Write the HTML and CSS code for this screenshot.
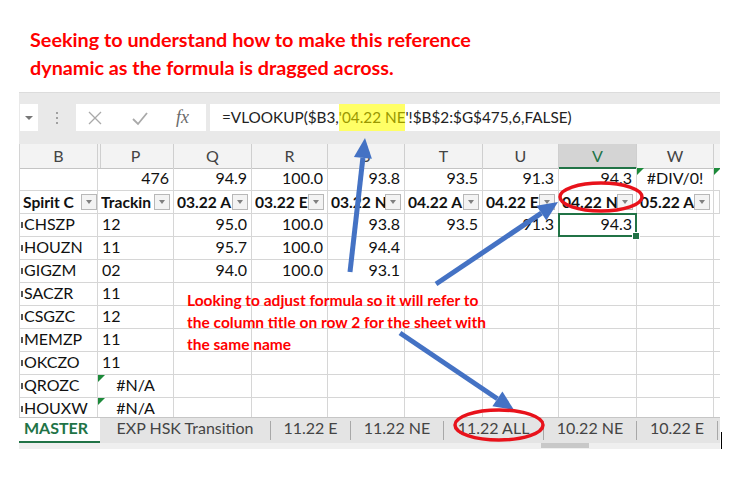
FILE: index.html
```html
<!DOCTYPE html>
<html>
<head>
<meta charset="utf-8">
<link rel="stylesheet" href="styles.css">
</head>
<body>
<div class="page">
  <div class="title">Seeking to understand how to make this reference<br>dynamic as the formula is dragged across.</div>
  <div class="excel">
    <div class="fbar">
      <div class="namebox"><span class="nb-arrow"></span></div>
      <div class="grip"><span></span><span></span><span></span></div>
      <div class="btns">
        <svg class="ic-x" width="16" height="16" viewBox="0 0 16 16"><path d="M2 2 L14 14 M14 2 L2 14" stroke="#a9a9a9" stroke-width="1.3" fill="none"/></svg>
        <svg class="ic-ok" width="18" height="16" viewBox="0 0 18 16"><path d="M2 9 L7 14 L16 3" stroke="#a9a9a9" stroke-width="1.8" fill="none"/></svg>
        <span class="fx">fx</span>
      </div>
      <div class="formula">=VLOOKUP($B3,<span class="hl">'04.22 NE</span>'!$B$2:$G$475,6,FALSE)</div>
    </div>
    <div class="sheet">
      <div class="row hdr">
        <div class="c">B</div><div class="c pl">P</div><div class="c">Q</div><div class="c">R</div><div class="c">S</div><div class="c">T</div><div class="c">U</div><div class="c vsel">V</div><div class="c">W</div><div class="c"></div>
      </div>
      <div class="row">
        <div class="c"></div><div class="c r">476</div><div class="c r">94.9</div><div class="c r">100.0</div><div class="c r">93.8</div><div class="c r">93.5</div><div class="c r">91.3</div><div class="c r">94.3</div><div class="c m tri">#DIV/0!</div><div class="c tri"></div>
      </div>
      <div class="row th">
        <div class="c first"><span class="t">Spirit C</span><span class="dd"></span></div>
        <div class="c"><span class="t">Trackin</span><span class="dd"></span></div>
        <div class="c"><span class="t">03.22 A</span><span class="dd"></span></div>
        <div class="c"><span class="t">03.22 E</span><span class="dd"></span></div>
        <div class="c"><span class="t">03.22 N</span><span class="dd"></span></div>
        <div class="c"><span class="t">04.22 A</span><span class="dd"></span></div>
        <div class="c"><span class="t">04.22 E</span><span class="dd"></span></div>
        <div class="c"><span class="t">04.22 N</span><span class="dd"></span></div>
        <div class="c"><span class="t">05.22 A</span><span class="dd"></span></div>
        <div class="c"></div>
      </div>
      <div class="row">
        <div class="c b">CHSZP</div><div class="c">12</div><div class="c r">95.0</div><div class="c r">100.0</div><div class="c r">93.8</div><div class="c r">93.5</div><div class="c r">91.3</div><div class="c r sel">94.3</div><div class="c"></div><div class="c"></div>
      </div>
      <div class="row">
        <div class="c b">HOUZN</div><div class="c">11</div><div class="c r">95.7</div><div class="c r">100.0</div><div class="c r">94.4</div><div class="c"></div><div class="c"></div><div class="c"></div><div class="c"></div><div class="c"></div>
      </div>
      <div class="row">
        <div class="c b">GIGZM</div><div class="c">02</div><div class="c r">94.0</div><div class="c r">100.0</div><div class="c r">93.1</div><div class="c"></div><div class="c"></div><div class="c"></div><div class="c"></div><div class="c"></div>
      </div>
      <div class="row">
        <div class="c b">SACZR</div><div class="c">11</div><div class="c"></div><div class="c"></div><div class="c"></div><div class="c"></div><div class="c"></div><div class="c"></div><div class="c"></div><div class="c"></div>
      </div>
      <div class="row">
        <div class="c b">CSGZC</div><div class="c">12</div><div class="c"></div><div class="c"></div><div class="c"></div><div class="c"></div><div class="c"></div><div class="c"></div><div class="c"></div><div class="c"></div>
      </div>
      <div class="row">
        <div class="c b">MEMZP</div><div class="c">11</div><div class="c"></div><div class="c"></div><div class="c"></div><div class="c"></div><div class="c"></div><div class="c"></div><div class="c"></div><div class="c"></div>
      </div>
      <div class="row">
        <div class="c b">OKCZO</div><div class="c">11</div><div class="c"></div><div class="c"></div><div class="c"></div><div class="c"></div><div class="c"></div><div class="c"></div><div class="c"></div><div class="c"></div>
      </div>
      <div class="row">
        <div class="c b">QROZC</div><div class="c m tri">#N/A</div><div class="c"></div><div class="c"></div><div class="c"></div><div class="c"></div><div class="c"></div><div class="c"></div><div class="c"></div><div class="c"></div>
      </div>
      <div class="row">
        <div class="c b">HOUXW</div><div class="c m tri">#N/A</div><div class="c"></div><div class="c"></div><div class="c"></div><div class="c"></div><div class="c"></div><div class="c"></div><div class="c"></div><div class="c"></div>
      </div>
    </div>
    <div class="tabs">
      <div class="tab active">MASTER</div>
      <div class="tab w170">EXP HSK Transition</div><span class="sep"></span>
      <div class="tab w79">11.22 E</div><span class="sep"></span>
      <div class="tab w92">11.22 NE</div><span class="sep"></span>
      <div class="tab w99">11.22 ALL</div><span class="sep"></span>
      <div class="tab w92">10.22 NE</div><span class="sep"></span>
      <div class="tab w80">10.22 E</div><span class="sep"></span>
    </div>
    <div class="hscroll"><span class="thumb"></span></div>
  </div>
  <div class="note">Looking to adjust formula so it will refer to<br>the column title on row 2 for the sheet with<br>the same name</div>
  <span class="cursor"></span>
  <svg class="overlay" width="739" height="481" viewBox="0 0 739 481">
    <g stroke="#4472c4" stroke-width="5" fill="none" stroke-linecap="butt">
      <line x1="350" y1="272" x2="362.9" y2="157.9"/>
      <line x1="436" y1="284" x2="541.4" y2="213.2"/>
      <line x1="400" y1="333" x2="497.4" y2="398.8"/>
    </g>
    <g fill="#4472c4">
      <polygon points="365,138 371.9,158.8 353.9,157"/>
      <polygon points="558,202 546.4,220.6 536.4,205.7"/>
      <polygon points="514,410 492.4,406.2 502.4,391.4"/>
    </g>
    <g stroke="#e8121b" stroke-width="3.5" fill="none">
      <ellipse cx="601" cy="197" rx="41" ry="14"/>
      <ellipse cx="499" cy="425" rx="44" ry="15"/>
    </g>
  </svg>
</div>
</body>
</html>
```
FILE: styles.css
```css
* { box-sizing: border-box; }
html, body { margin: 0; padding: 0; background: #fff; }
body { width: 739px; height: 481px; overflow: hidden; font-family: Lato, "Open Sans", sans-serif; }
.page { position: relative; width: 739px; height: 481px; padding-top: 25px; overflow: hidden; }

.title {
  margin: 0 0 0 30px;
  font-weight: 700;
  font-size: 19.8px;
  line-height: 28px;
  color: #f00;
}

.excel { margin: 11px 0 0 19px; width: 701px; }

.fbar {
  height: 52px;
  background: #e9e9e9;
  border-top: 1px solid #dcdcdc;
  display: flex;
  align-items: flex-start;
  padding: 11px 0 0 1px;
}
.namebox {
  width: 18px; height: 27px; background: #fff;
  display: flex; align-items: center; padding-left: 5px;
}
.nb-arrow { width: 0; height: 0; border-left: 4px solid transparent; border-right: 4px solid transparent; border-top: 4px solid #777; }
.grip { width: 38px; height: 27px; display: flex; flex-direction: column; align-items: center; justify-content: center; gap: 3px; }
.grip span { width: 2px; height: 2px; background: #a0a0a0; }
.btns {
  width: 130px; height: 27px; background: #fff;
  position: relative; display: flex; align-items: center;
}
.ic-x { margin-left: 11px; }
.ic-ok { margin-left: 28px; }
.fx { margin-left: 27px; font-family: "Liberation Serif", serif; font-style: italic; font-size: 18px; color: #6a6a6a; }
.formula {
  margin-left: 4px; width: 510px; height: 27px; background: #fff;
  padding-left: 12px; font-size: 15.3px; line-height: 27px; color: #222; white-space: nowrap;
}
.hl { display: inline-block; background: #ffff66; color: #9a9800; line-height: 27px; }

.sheet { height: 273px; overflow: hidden; border-left: 1px solid #d4d4d4; background: #fff; }
.row {
  display: grid;
  grid-template-columns: 78px 76px 78px 76px 77px 78px 76px 78px 77px 6px;
  height: 23px;
}
.c {
  position: relative;
  border-right: 1px solid #d6d6d6;
  border-bottom: 1px solid #d6d6d6;
  padding: 0 4px;
  font-size: 16px;
  line-height: 20px;
  color: #111;
  white-space: nowrap;
}
.r { text-align: right; }
.m { text-align: center; }
.hdr { height: 24px; background: #f3f3f3; }
.hdr .c { text-align: center; color: #444; line-height: 23px; border-right-color: #cfcfcf; border-bottom-color: #c4c4c4; }
.hdr .pl { box-shadow: inset 2px 0 0 #f3f3f3, inset 3px 0 0 #cfcfcf; }
.hdr .vsel { background: #d4d4d4; border-bottom: 2px solid #217346; color: #217346; }

.th .c { display: flex; align-items: center; font-weight: 700; font-size: 15.6px; padding: 0 0 1px 3px; }
.th .t { flex: 1; min-width: 0; overflow: hidden; white-space: nowrap; }
.dd {
  flex: none; width: 16px; height: 16px; border: 1px solid #b8b8b8; background: #f3f3f3;
  margin-right: 3px;
  display: flex; align-items: center; justify-content: center;
}
.th .first .dd { margin-right: 0; }
.dd::after { content: ""; border-left: 3.5px solid transparent; border-right: 3.5px solid transparent; border-top: 4px solid #808080; }

.b::before { content: ""; position: absolute; left: 1px; top: 8px; width: 1.5px; height: 6px; background: #555; }
.tri::before { content: ""; position: absolute; left: 0; top: 0; border-top: 7px solid #1c8a3a; border-right: 7px solid transparent; }
.sel::after { content: ""; position: absolute; left: -1px; top: -1px; right: -1px; bottom: -1px; border: 2px solid #217346; }
.sel::before { content: ""; position: absolute; right: -4px; bottom: -4px; width: 6px; height: 6px; background: #217346; border: 1px solid #fff; z-index: 2; }

.tabs {
  height: 26px; background: #e4e4e4; border-top: 1px solid #c6c6c6;
  display: flex; align-items: center; overflow: hidden;
}
.tab { flex: none; padding: 0 0 6px; text-align: center; font-size: 16px; line-height: 19px; color: #444; white-space: nowrap; }
.w170 { width: 170px; }
.w79 { width: 79px; }
.w80 { width: 80px; }
.w92 { width: 92px; }
.w99 { width: 99px; }
.tab.active {
  align-self: stretch; width: 81px; padding: 0 0 0 5px; text-align: left; line-height: 21px; background: #fff;
  color: #217346; font-weight: 700; border-bottom: 2px solid #217346; margin-top: -1px;
}
.sep { flex: none; width: 1px; height: 19px; background: #a8a8a8; margin-bottom: 1px; }
.hscroll { height: 6px; background: #efefef; position: relative; }
.thumb { position: absolute; left: 522px; top: 0; width: 48px; height: 5px; background: #c8c8c8; }

.note {
  position: absolute; left: 187px; top: 289px;
  font-weight: 700; font-size: 15.5px; line-height: 22px; color: #f00;
}
.cursor { position: absolute; left: 721px; top: 432px; width: 1px; height: 17px; background: #000; }
.overlay { position: absolute; left: 0; top: 0; pointer-events: none; }
```
